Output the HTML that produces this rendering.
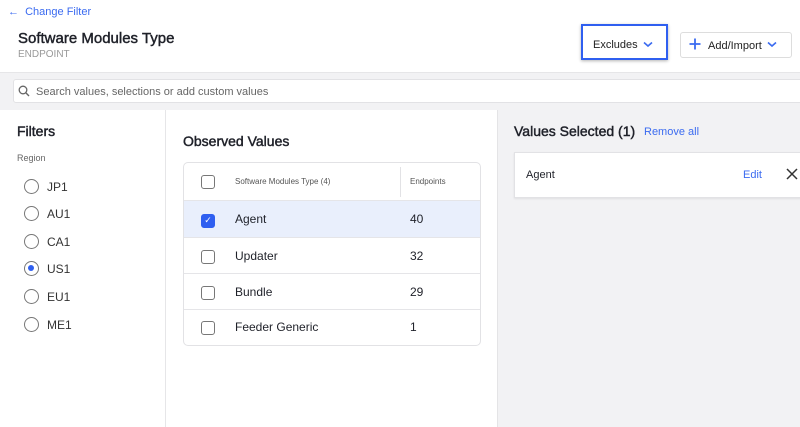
<!DOCTYPE html>
<html><head><style>
*{box-sizing:border-box;margin:0;padding:0}
body{width:800px;height:427px;overflow:hidden;background:#fff;font-family:"Liberation Sans",sans-serif;color:#1f2129;position:relative}
.a{position:absolute}
.blue{color:#3b6bf0}
.radio{position:absolute;left:24px;width:15px;height:15px;border:1.5px solid #777;border-radius:50%}
.rl{position:absolute;left:47px;font-size:12px;color:#333}
.cb{position:absolute;left:17px;width:14px;height:14px;border:1.5px solid #777;border-radius:3px}
.row{position:absolute;left:0;width:297px;border-top:1px solid #e5e5e8}
.row .t{position:absolute;left:51px;font-size:12px}
.row .n{position:absolute;left:226px;font-size:12px}
.h{color:#1f2129;-webkit-text-stroke:0.45px #1f2129}
</style></head><body>
<div class="a blue" style="left:8px;top:6px;font-size:11px">&#8592;&nbsp; Change Filter</div>
<div class="a h" style="left:18px;top:30px;font-size:15px">Software Modules Type</div>
<div class="a" style="left:18px;top:49px;font-size:10px;color:#999">ENDPOINT</div>
<div class="a" style="left:581px;top:24px;width:87px;height:36px;border:2px solid #2f5ff0;box-shadow:0 1px 3px rgba(0,0,0,.3);font-size:11px;padding:13px 0 0 10px;color:#222">Excludes</div>
<svg class="a" style="left:643px;top:41px" width="10" height="7"><path d="M1 1.5 L5 5 L9 1.5" fill="none" stroke="#3b6bf0" stroke-width="1.6"/></svg>
<div class="a" style="left:680px;top:32px;width:112px;height:26px;border:1px solid #ddd;border-radius:3px;font-size:11px;padding:7px 0 0 27px;color:#222">Add/Import</div>
<svg class="a" style="left:689px;top:38px" width="12" height="12"><path d="M6 0.5V11.5M0.5 6H11.5" stroke="#3b6bf0" stroke-width="1.8"/></svg>
<svg class="a" style="left:767px;top:41px" width="10" height="7"><path d="M1 1.5 L5 5 L9 1.5" fill="none" stroke="#3b6bf0" stroke-width="1.6"/></svg>
<div class="a" style="left:0;top:72px;width:800px;height:38px;background:#f2f2f4;border-top:1px solid #e6e6e8"></div>
<div class="a" style="left:13px;top:79px;width:790px;height:24px;background:#fff;border:1px solid #e2e2e5;border-radius:3px;font-size:11px;color:#666;padding:6px 0 0 22px">Search values, selections or add custom values</div>
<svg class="a" style="left:18px;top:85px" width="12" height="12"><circle cx="5" cy="5" r="3.8" fill="none" stroke="#666" stroke-width="1.3"/><line x1="7.8" y1="7.8" x2="11" y2="11" stroke="#666" stroke-width="1.4"/></svg>
<div class="a" style="left:165px;top:110px;width:1px;height:317px;background:#e6e6e8"></div>
<div class="a" style="left:497px;top:110px;width:303px;height:317px;background:#f2f2f4;border-left:1px solid #e4e4e6"></div>
<div class="a h" style="left:17px;top:123px;font-size:14px">Filters</div>
<div class="a" style="left:17px;top:153px;font-size:9px;color:#666">Region</div>
<div class="radio" style="top:179px"></div><div class="rl" style="top:180px">JP1</div>
<div class="radio" style="top:206px"></div><div class="rl" style="top:207px">AU1</div>
<div class="radio" style="top:234px"></div><div class="rl" style="top:235px">CA1</div>
<div class="radio" style="top:261px"><div style="position:absolute;left:3px;top:3px;width:6px;height:6px;border-radius:50%;background:#2f5ff0"></div></div><div class="rl" style="top:262px">US1</div>
<div class="radio" style="top:289px"></div><div class="rl" style="top:290px">EU1</div>
<div class="radio" style="top:317px"></div><div class="rl" style="top:318px">ME1</div>
<div class="a h" style="left:183px;top:133px;font-size:14px">Observed Values</div>
<div class="a" style="left:183px;top:162px;width:298px;height:184px;border:1px solid #e2e2e5;border-radius:5px;overflow:hidden">
 <div class="cb" style="top:12px"></div>
 <div class="a" style="left:51px;top:14px;font-size:8px;color:#555">Software Modules Type (4)</div>
 <div class="a" style="left:216px;top:4px;width:1px;height:30px;background:#e2e2e5"></div>
 <div class="a" style="left:226px;top:14px;font-size:8px;color:#555">Endpoints</div>
 <div class="row" style="top:37px;height:37px;background:#e9effc"><div class="cb" style="top:13px;background:#2f5ff0;border-color:#2f5ff0;color:#fff;font-size:9px;text-align:center;line-height:11px">&#10003;</div><div class="t" style="top:11px">Agent</div><div class="n" style="top:11px">40</div></div>
 <div class="row" style="top:74px;height:36px"><div class="cb" style="top:12px"></div><div class="t" style="top:11px">Updater</div><div class="n" style="top:11px">32</div></div>
 <div class="row" style="top:110px;height:36px"><div class="cb" style="top:12px"></div><div class="t" style="top:11px">Bundle</div><div class="n" style="top:11px">29</div></div>
 <div class="row" style="top:146px;height:37px"><div class="cb" style="top:11px"></div><div class="t" style="top:10px">Feeder Generic</div><div class="n" style="top:10px">1</div></div>
</div>
<div class="a h" style="left:514px;top:123px;font-size:14px">Values Selected (1)</div>
<div class="a blue" style="left:644px;top:126px;font-size:11px">Remove all</div>
<div class="a" style="left:514px;top:152px;width:290px;height:46px;background:#fff;border:1px solid #e2e2e5;box-shadow:0 1px 2px rgba(0,0,0,.08)"></div>
<div class="a" style="left:526px;top:169px;font-size:11px">Agent</div>
<div class="a blue" style="left:743px;top:169px;font-size:11px">Edit</div>
<svg class="a" style="left:786px;top:168px" width="12" height="12"><path d="M1 1L11 11M11 1L1 11" stroke="#333" stroke-width="1.5"/></svg>
</body></html>
